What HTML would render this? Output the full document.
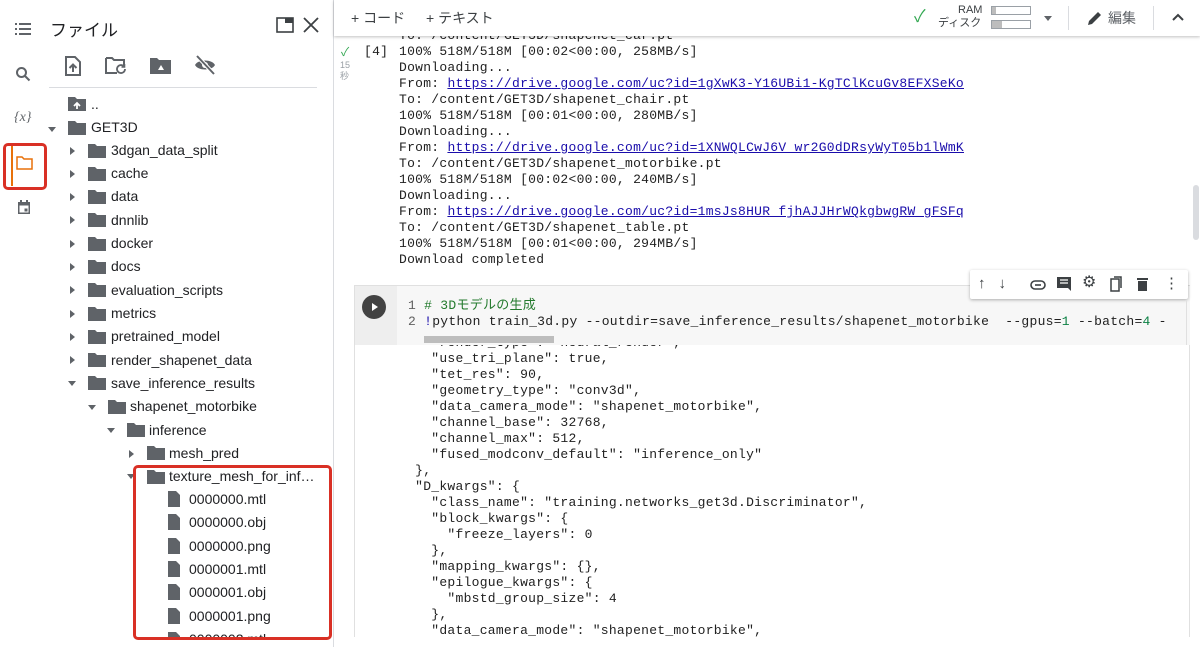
<!DOCTYPE html>
<html><head><meta charset="utf-8"><style>
*{margin:0;padding:0;box-sizing:border-box}
body{width:1200px;height:647px;overflow:hidden;background:#fff;position:relative;font-family:"Liberation Sans","Noto Sans CJK JP",sans-serif;color:#202124}
.a{position:absolute}
.t{position:absolute;font-size:14px;line-height:16px;white-space:nowrap}
.m{position:absolute;font-family:"Liberation Mono","Noto Sans CJK JP",monospace;font-size:13px;letter-spacing:0.27px;line-height:16px;white-space:pre;color:#212121}
.arr{position:absolute;width:0;height:0}
.ar{border-top:4px solid transparent;border-bottom:4px solid transparent;border-left:5px solid #5f6368}
.ad{border-left:4px solid transparent;border-right:4px solid transparent;border-top:5px solid #5f6368}
a{color:#1a0dab;text-decoration:underline}
</style></head><body>
<!-- icon rail -->
<svg class="a" style="left:14px;top:21px" width="18" height="16" viewBox="0 0 18 16" fill="#5f6368"><rect x="1" y="2" width="2" height="2"/><rect x="5" y="2" width="12" height="2"/><rect x="1" y="7" width="2" height="2"/><rect x="5" y="7" width="12" height="2"/><rect x="1" y="12" width="2" height="2"/><rect x="5" y="12" width="12" height="2"/></svg>
<svg class="a" style="left:15px;top:66px" width="16" height="16" viewBox="0 0 16 16"><circle cx="6.5" cy="6.5" r="4.5" stroke="#5f6368" stroke-width="2" fill="none"/><path d="M10 10l4.5 4.5" stroke="#5f6368" stroke-width="2"/></svg>
<div class="t" style="left:14px;top:110px;font-family:'Liberation Serif',serif;font-style:italic;color:#5f6368;font-size:14px">{<i>x</i>}</div>
<div class="a" style="left:3px;top:143px;width:44px;height:47px;border:3px solid #d93025;border-radius:5px"></div>
<div class="a" style="left:11px;top:146px;width:2px;height:40px;background:#e8710a"></div>
<svg class="a" style="left:16px;top:156px" width="17" height="14" viewBox="0 0 17 14"><path d="M1 1h5l2 2h8v10H1z" fill="none" stroke="#e8710a" stroke-width="1.5"/></svg>
<svg class="a" style="left:17px;top:199px" width="14" height="16" viewBox="0 0 14 16" fill="#5f6368"><path d="M1 3h12v12H1zM2.5 6.5v7h9v-7z"/><rect x="3" y="1" width="2" height="3"/><rect x="9" y="1" width="2" height="3"/><rect x="7.5" y="9.5" width="3" height="3"/></svg>
<!-- panel -->
<div class="t" style="left:50px;top:21px;font-size:17px;line-height:20px;color:#202124">ファイル</div>
<svg class="a" style="left:276px;top:17px" width="18" height="16" viewBox="0 0 18 16"><rect x="1" y="1" width="16" height="14" fill="none" stroke="#3c4043" stroke-width="1.6"/><rect x="9" y="1" width="8" height="5" fill="#3c4043"/></svg>
<svg class="a" style="left:303px;top:17px" width="16" height="16" viewBox="0 0 16 16"><path d="M1 1l14 14M15 1L1 15" stroke="#3c4043" stroke-width="1.8"/></svg>
<svg class="a" style="left:64px;top:56px" width="18" height="20" viewBox="0 0 18 20"><path d="M2 1h9l5 5v13H2z" fill="none" stroke="#5f6368" stroke-width="2"/><path d="M9 16V9M5.5 12L9 8.5l3.5 3.5" stroke="#5f6368" stroke-width="2" fill="none"/></svg>
<svg class="a" style="left:105px;top:57px" width="22" height="18" viewBox="0 0 22 18"><path d="M1 1h6l2 2h10v5M12 16H1V1" fill="none" stroke="#5f6368" stroke-width="2"/><path d="M20 12a4 4 0 1 1-1.2-2.8" fill="none" stroke="#5f6368" stroke-width="1.8"/><path d="M19.5 7v3h-3" fill="none" stroke="#5f6368" stroke-width="1.6"/></svg>
<svg class="a" style="left:150px;top:57px" width="21" height="17" viewBox="0 0 21 17"><path d="M0 1h7l2 2h12v14H0z" fill="#5f6368"/><path d="M8 13l3-5 3 5z" fill="#fff"/></svg>
<svg class="a" style="left:194px;top:55px" width="22" height="20" viewBox="0 0 22 20"><path d="M1 10c3-6 17-6 20 0-3 6-17 6-20 0z" fill="#5f6368"/><circle cx="11" cy="10" r="3" fill="#fff"/><path d="M3 1l17 18" stroke="#fff" stroke-width="4"/><path d="M3 1l17 18" stroke="#5f6368" stroke-width="2"/></svg>
<div class="a" style="left:49px;top:87px;width:268px;height:1px;background:#dadce0"></div>
<div class="a" style="left:333px;top:0;width:1px;height:647px;background:#dadce0"></div>

<!-- tree -->
<svg width="0" height="0" style="position:absolute"><defs>
<symbol id="fo" viewBox="0 0 18 14"><path d="M0 0h7l2 2h9v12H0z" fill="#5f6368"/></symbol>
<symbol id="fi" viewBox="0 0 12 16"><path d="M0 0h8l4 4v12H0z" fill="#5f6368"/></symbol>
</defs></svg>
<svg class="a" style="left:68px;top:97px" width="18" height="14" viewBox="0 0 18 14"><path d="M0 0h7l2 2h9v12H0z" fill="#5f6368"/><path d="M9 12V7M6 9l3-3 3 3" stroke="#fff" stroke-width="1.8" fill="none"/></svg>
<div class="t" style="left:91px;top:96px">..</div>

<div class="arr ad" style="left:48px;top:127px"></div><svg class="a" style="left:68px;top:121px" width="18" height="14"><use href="#fo"/></svg><div class="t" style="left:91px;top:119px">GET3D</div>

<div class="arr ar" style="left:70px;top:147px"></div><svg class="a" style="left:88px;top:144px" width="18" height="14"><use href="#fo"/></svg><div class="t" style="left:111px;top:142px">3dgan_data_split</div>
<div class="arr ar" style="left:70px;top:170px"></div><svg class="a" style="left:88px;top:167px" width="18" height="14"><use href="#fo"/></svg><div class="t" style="left:111px;top:165px">cache</div>
<div class="arr ar" style="left:70px;top:193px"></div><svg class="a" style="left:88px;top:190px" width="18" height="14"><use href="#fo"/></svg><div class="t" style="left:111px;top:188px">data</div>
<div class="arr ar" style="left:70px;top:216px"></div><svg class="a" style="left:88px;top:213px" width="18" height="14"><use href="#fo"/></svg><div class="t" style="left:111px;top:212px">dnnlib</div>
<div class="arr ar" style="left:70px;top:240px"></div><svg class="a" style="left:88px;top:237px" width="18" height="14"><use href="#fo"/></svg><div class="t" style="left:111px;top:235px">docker</div>
<div class="arr ar" style="left:70px;top:263px"></div><svg class="a" style="left:88px;top:260px" width="18" height="14"><use href="#fo"/></svg><div class="t" style="left:111px;top:258px">docs</div>
<div class="arr ar" style="left:70px;top:286px"></div><svg class="a" style="left:88px;top:283px" width="18" height="14"><use href="#fo"/></svg><div class="t" style="left:111px;top:282px">evaluation_scripts</div>
<div class="arr ar" style="left:70px;top:310px"></div><svg class="a" style="left:88px;top:307px" width="18" height="14"><use href="#fo"/></svg><div class="t" style="left:111px;top:305px">metrics</div>
<div class="arr ar" style="left:70px;top:333px"></div><svg class="a" style="left:88px;top:330px" width="18" height="14"><use href="#fo"/></svg><div class="t" style="left:111px;top:328px">pretrained_model</div>
<div class="arr ar" style="left:70px;top:356px"></div><svg class="a" style="left:88px;top:353px" width="18" height="14"><use href="#fo"/></svg><div class="t" style="left:111px;top:352px">render_shapenet_data</div>
<div class="arr ad" style="left:68px;top:381px"></div><svg class="a" style="left:88px;top:376px" width="18" height="14"><use href="#fo"/></svg><div class="t" style="left:111px;top:375px">save_inference_results</div>
<div class="arr ad" style="left:88px;top:405px"></div><svg class="a" style="left:108px;top:400px" width="18" height="14"><use href="#fo"/></svg><div class="t" style="left:130px;top:398px">shapenet_motorbike</div>
<div class="arr ad" style="left:107px;top:428px"></div><svg class="a" style="left:127px;top:423px" width="18" height="14"><use href="#fo"/></svg><div class="t" style="left:149px;top:422px">inference</div>
<div class="arr ar" style="left:129px;top:450px"></div><svg class="a" style="left:147px;top:446px" width="18" height="14"><use href="#fo"/></svg><div class="t" style="left:169px;top:445px">mesh_pred</div>
<div class="arr ad" style="left:127px;top:474px"></div><svg class="a" style="left:147px;top:470px" width="18" height="14"><use href="#fo"/></svg><div class="t" style="left:169px;top:468px">texture_mesh_for_inf…</div>
<svg class="a" style="left:168px;top:491px" width="12" height="16"><use href="#fi"/></svg><div class="t" style="left:189px;top:491px">0000000.mtl</div>
<svg class="a" style="left:168px;top:514px" width="12" height="16"><use href="#fi"/></svg><div class="t" style="left:189px;top:514px">0000000.obj</div>
<svg class="a" style="left:168px;top:538px" width="12" height="16"><use href="#fi"/></svg><div class="t" style="left:189px;top:538px">0000000.png</div>
<svg class="a" style="left:168px;top:561px" width="12" height="16"><use href="#fi"/></svg><div class="t" style="left:189px;top:561px">0000001.mtl</div>
<svg class="a" style="left:168px;top:584px" width="12" height="16"><use href="#fi"/></svg><div class="t" style="left:189px;top:584px">0000001.obj</div>
<svg class="a" style="left:168px;top:608px" width="12" height="16"><use href="#fi"/></svg><div class="t" style="left:189px;top:608px">0000001.png</div>
<div class="a" style="left:133px;top:465px;width:199px;height:175px;border:3px solid #d93025;border-radius:5px"></div>
<div class="a" style="left:136px;top:632px;width:193px;height:5px;overflow:hidden"><svg class="a" style="left:32px;top:0" width="12" height="16"><use href="#fi"/></svg><div class="t" style="left:53px;top:-1px">0000002.mtl</div></div>

<!-- top toolbar -->
<div class="a" style="left:334px;top:0;width:866px;height:36px;background:#fff;box-shadow:0 1px 3px rgba(0,0,0,.25);z-index:2">
 <div class="t" style="left:17px;top:10px;font-size:14px;color:#3c4043">+ コード</div>
 <div class="t" style="left:92px;top:10px;font-size:14px;color:#3c4043">+ テキスト</div>
 <div class="t" style="left:580px;top:9px;font-size:17px;color:#34a853">✓</div>
 <div class="t" style="left:624px;top:4px;font-size:11px;line-height:12px;color:#3c4043">RAM</div>
 <div class="t" style="left:604px;top:17px;font-size:11px;line-height:13px;color:#3c4043">ディスク</div>
 <div class="a" style="left:657px;top:6px;width:40px;height:9px;border:1px solid #9aa0a6"><div style="width:4px;height:7px;background:#bdbdbd"></div></div>
 <div class="a" style="left:657px;top:20px;width:40px;height:9px;border:1px solid #9aa0a6"><div style="width:10px;height:7px;background:#bdbdbd"></div></div>
 <div class="arr ad" style="left:710px;top:16px"></div>
 <div class="a" style="left:734px;top:6px;width:1px;height:24px;background:#dadce0"></div>
 <svg class="a" style="left:753px;top:10px" width="16" height="16" viewBox="0 0 16 16"><path d="M1 15l1-4L11 2l3 3-9 9z" fill="#3c4043"/></svg>
 <div class="t" style="left:774px;top:10px;font-size:14px;color:#5f6368">編集</div>
 <div class="a" style="left:819px;top:6px;width:1px;height:24px;background:#dadce0"></div>
 <svg class="a" style="left:838px;top:13px" width="12" height="8" viewBox="0 0 12 8"><path d="M1 7l5-5 5 5" stroke="#3c4043" stroke-width="2" fill="none"/></svg>
</div>

<!-- output 1 -->
<div class="t" style="left:341px;top:44px;font-size:12px;color:#34a853">✓</div>
<div class="m" style="left:364px;top:44px">[4]</div>
<div class="t" style="left:340px;top:60px;font-size:9px;line-height:11px;color:#9aa0a6">15<br>秒</div>
<div class="m" style="left:399px;top:28px">To: /content/GET3D/shapenet_car.pt
100% 518M/518M [00:02&lt;00:00, 258MB/s]
Downloading...
From: <a>https://drive.google.com/uc?id=1gXwK3-Y16UBi1-KgTClKcuGv8EFXSeKo</a>
To: /content/GET3D/shapenet_chair.pt
100% 518M/518M [00:01&lt;00:00, 280MB/s]
Downloading...
From: <a>https://drive.google.com/uc?id=1XNWQLCwJ6V_wr2G0dDRsyWyT05b1lWmK</a>
To: /content/GET3D/shapenet_motorbike.pt
100% 518M/518M [00:02&lt;00:00, 240MB/s]
Downloading...
From: <a>https://drive.google.com/uc?id=1msJs8HUR_fjhAJJHrWQkgbwgRW_gFSFq</a>
To: /content/GET3D/shapenet_table.pt
100% 518M/518M [00:01&lt;00:00, 294MB/s]
Download completed</div>
<div class="a" style="left:1193px;top:185px;width:6px;height:55px;background:#dadce0;border-radius:3px"></div>

<!-- cell 2 -->
<div class="a" style="left:354px;top:285px;width:836px;height:352px;border:1px solid #e0e0e0;border-bottom:none;background:#fff"></div>
<div class="a" style="left:355px;top:286px;width:42px;height:59px;background:#eeeeee"></div>
<div class="a" style="left:397px;top:286px;width:793px;height:59px;background:#f7f7f7"></div>
<div class="a" style="left:362px;top:295px;width:24px;height:24px;border-radius:50%;background:#424242"></div>
<div class="arr ar" style="left:372px;top:303px;border-left-color:#fff;border-left-width:6px"></div>
<div class="m" style="left:408px;top:298px"><span style="color:#616161">1 </span><span style="color:#237a2d"># 3Dモデルの生成</span>
<span style="color:#616161">2 </span><span style="color:#1a0dab">!</span>python train_3d.py --outdir=save_inference_results/shapenet_motorbike  --gpus=<span style="color:#0b8043">1</span> --batch=<span style="color:#0b8043">4</span> -</div>
<div class="a" style="left:970px;top:270px;width:218px;height:29px;background:#fff;box-shadow:0 1px 3px rgba(0,0,0,.3);border-radius:2px"></div>
<div class="t" style="left:978px;top:276px;font-size:15px;color:#3c4043;letter-spacing:13px">↑↓</div>
<svg class="a" style="left:1030px;top:280px" width="16" height="10" viewBox="0 0 16 10"><rect x="1" y="1" width="14" height="8" rx="4" fill="none" stroke="#3c4043" stroke-width="1.6"/><path d="M5 5h6" stroke="#3c4043" stroke-width="1.6"/></svg>
<svg class="a" style="left:1057px;top:277px" width="14" height="14" viewBox="0 0 14 14"><path d="M0 0h14v14l-3-3H0z" fill="#3c4043"/><path d="M3 3h8M3 6h8" stroke="#fff" stroke-width="1.3"/></svg>
<div class="t" style="left:1082px;top:275px;font-size:16px;color:#3c4043">⚙</div>
<svg class="a" style="left:1110px;top:276px" width="12" height="16" viewBox="0 0 12 16"><rect x="1" y="3" width="8" height="12" fill="none" stroke="#3c4043" stroke-width="1.5"/><path d="M4 1h7v11" fill="none" stroke="#3c4043" stroke-width="1.5"/></svg>
<svg class="a" style="left:1137px;top:277px" width="11" height="14" viewBox="0 0 11 14"><rect x="0" y="1" width="11" height="2" fill="#3c4043"/><path d="M1 4h9v10H1z" fill="#3c4043"/></svg>
<div class="t" style="left:1164px;top:276px;font-size:15px;color:#3c4043">⋮</div>
<div class="a" style="left:1186px;top:300px;width:1px;height:45px;background:#e0e0e0"></div>

<div class="a" style="left:399px;top:345px;width:780px;height:292px;overflow:hidden">
<div class="m" style="left:0;top:-10px">    "render_type": "neural_render",
    "use_tri_plane": true,
    "tet_res": 90,
    "geometry_type": "conv3d",
    "data_camera_mode": "shapenet_motorbike",
    "channel_base": 32768,
    "channel_max": 512,
    "fused_modconv_default": "inference_only"
  },
  "D_kwargs": {
    "class_name": "training.networks_get3d.Discriminator",
    "block_kwargs": {
      "freeze_layers": 0
    },
    "mapping_kwargs": {},
    "epilogue_kwargs": {
      "mbstd_group_size": 4
    },
    "data_camera_mode": "shapenet_motorbike",</div>
</div>
<div class="a" style="left:424px;top:336px;width:130px;height:7px;background:#bdbdbd"></div>
</body></html>
